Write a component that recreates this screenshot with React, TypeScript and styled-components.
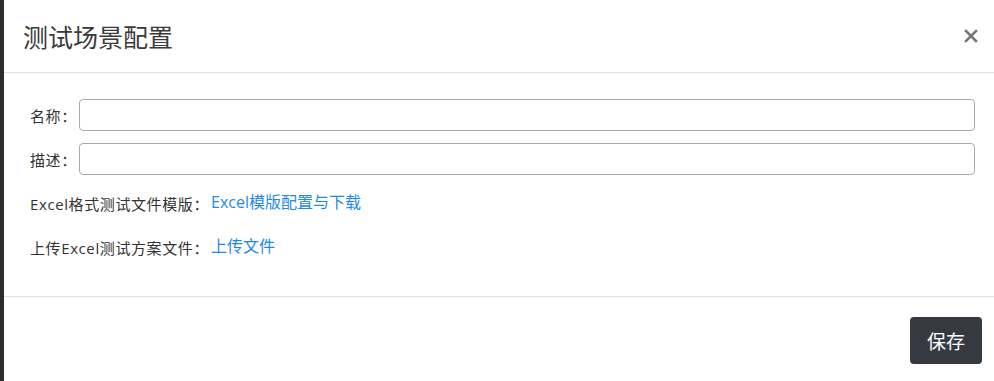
import React from "react";
import styled, { createGlobalStyle } from "styled-components";

const GlobalStyle = createGlobalStyle`
html, body {
  margin: 0;
  padding: 0;
  height: 100%;
  overflow: hidden;
  background: #2b2b2b;
  font-family: "Noto Sans CJK SC", "Liberation Sans", sans-serif;
}
`;

const Modal = styled.div`
margin-left: 4px;
background: #fff;
min-height: 100vh;
display: flex;
flex-direction: column;
`;

const Header = styled.div`
display: flex;
align-items: center;
justify-content: space-between;
height: 72px;
padding: 0 12px 0 19px;
border-bottom: 1px solid #dee2e6;
`;

const Title = styled.h4`
margin: 0;
font-size: 25px;
font-weight: 400;
color: #3a3a3a;
line-height: 1;
`;

const CloseButton = styled.button`
border: none;
background: none;
padding: 4px;
cursor: pointer;
display: flex;
`;

const Body = styled.div`
padding: 26px 19px 33px 26px;
display: flex;
flex-direction: column;
gap: 12px;
`;

const Row = styled.div`
display: flex;
align-items: center;
height: 32px;
`;

const Label = styled.label`
font-family: "Open Sans", "Noto Sans CJK SC", sans-serif;
font-size: 15px;
letter-spacing: 0.6px;
color: #333;
white-space: nowrap;
`;

const Input = styled.input`
flex: 1;
height: 32px;
box-sizing: border-box;
border: 1px solid #a9a9a9;
border-radius: 4px;
margin-left: 2px;
padding: 0 8px;
font-size: 15px;
outline: none;
`;

const Link = styled.a`
font-family: "Open Sans", "Noto Sans CJK SC", sans-serif;
font-size: 16px;
color: #1e8ae6;
text-decoration: none;
margin-left: 2px;
position: relative;
top: -2px;
cursor: pointer;
`;

const Footer = styled.div`
border-top: 1px solid #dee2e6;
display: flex;
justify-content: flex-end;
padding: 20px 12px 20px;
`;

const SaveButton = styled.button`
height: 47px;
padding: 0 17px;
border: none;
border-radius: 4px;
background: #343a40;
color: #fff;
font-family: "Noto Sans CJK SC", sans-serif;
font-size: 19px;
cursor: pointer;
`;

const CloseIcon = () => (
  <svg width="14" height="14" viewBox="0 0 14 14">
    <path d="M2 2L12 12M12 2L2 12" stroke="#777" strokeWidth="2.6" strokeLinecap="square" />
  </svg>
);

export default function App() {
  return (
    <>
      <GlobalStyle />
      <Modal>
        <Header>
          <Title>测试场景配置</Title>
          <CloseButton aria-label="关闭">
            <CloseIcon />
          </CloseButton>
        </Header>
        <Body>
          <Row>
            <Label>名称：</Label>
            <Input />
          </Row>
          <Row>
            <Label>描述：</Label>
            <Input />
          </Row>
          <Row>
            <Label>Excel格式测试文件模版：</Label>
            <Link>Excel模版配置与下载</Link>
          </Row>
          <Row>
            <Label>上传Excel测试方案文件：</Label>
            <Link>上传文件</Link>
          </Row>
        </Body>
        <Footer>
          <SaveButton>保存</SaveButton>
        </Footer>
      </Modal>
    </>
  );
}
